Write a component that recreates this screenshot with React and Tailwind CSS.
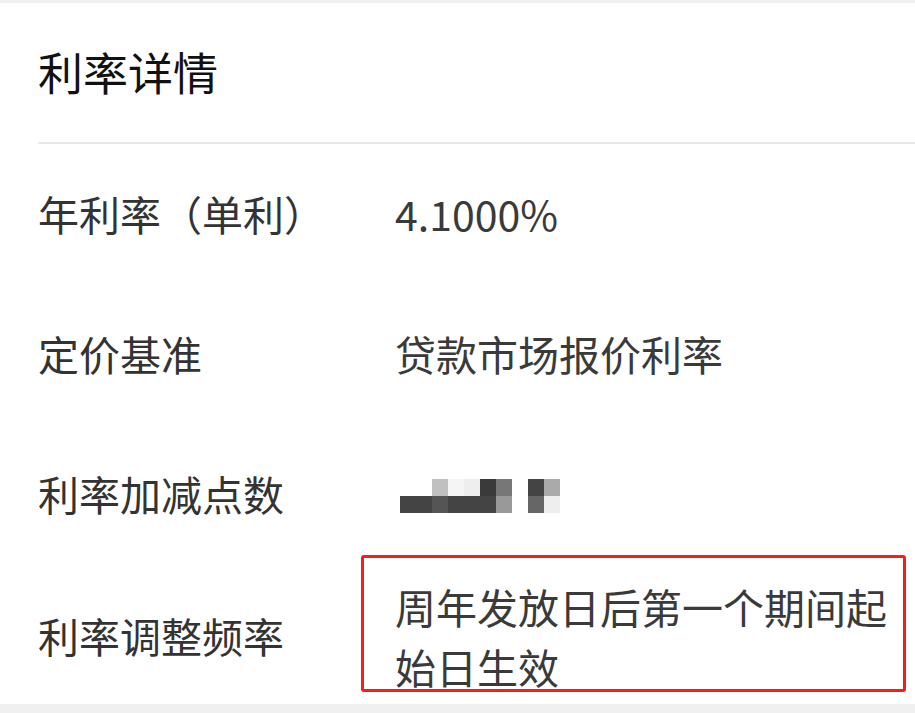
const font = { fontFamily: '"Noto Sans CJK SC", "Noto Sans", sans-serif' };

const pixels = [
  ['#ffffff', '#ffffff', '#c0c0c0', '#f5f5f5', '#eeeeee', '#3a3a3a', '#777777', '#ffffff', '#444444', '#aaaaaa'],
  ['#444444', '#444444', '#555555', '#444444', '#444444', '#444444', '#999999', '#ffffff', '#666666', '#eeeeee'],
];

const Mosaic = () => (
  <div className="grid grid-cols-[repeat(10,16px)] grid-rows-[17px_17px] mt-1">
    {pixels.flat().map((c, i) => (
      <div key={i} style={{ backgroundColor: c }} />
    ))}
  </div>
);

const Row = ({ label, children }) => (
  <div className="flex items-center h-[140px]">
    <div className="w-[357px] text-[41px] text-[#333]">{label}</div>
    <div className="flex-1 text-[41px] text-[#3a3a3a]">{children}</div>
  </div>
);

export default function App() {
  return (
    <div className="w-[915px] h-[713px] bg-white flex flex-col overflow-hidden" style={font}>
      <div className="h-[3px] bg-[#f0f0f0]" />
      <div className="h-[139px] flex items-center pl-[38px] pb-[2px]">
        <h1 className="text-[45px] text-[#111] leading-none">利率详情</h1>
      </div>
      <div className="ml-[38px] h-[2px] bg-[#e8e8e8]" />
      <div className="pl-[38px]">
        <Row label="年利率（单利）">4.1000%</Row>
        <Row label="定价基准">贷款市场报价利率</Row>
        <Row label="利率加减点数">
          <div className="pl-[5px]">
            <Mosaic />
          </div>
        </Row>
        <div className="relative flex items-center h-[140px] pt-[4px]">
          <div className="w-[357px] text-[41px] text-[#333]">利率调整频率</div>
          <div className="flex-1 pr-[20px] text-[41px] leading-[60px] text-[#3a3a3a]">
            周年发放日后第一个期间起始日生效
          </div>
          <div className="absolute left-[323px] top-[-9px] w-[545px] h-[137px] border-[3px] border-[#f2201a] rounded-[3px]" />
        </div>
      </div>
      <div className="flex-1 bg-[#f0f0f0]" />
    </div>
  );
}
